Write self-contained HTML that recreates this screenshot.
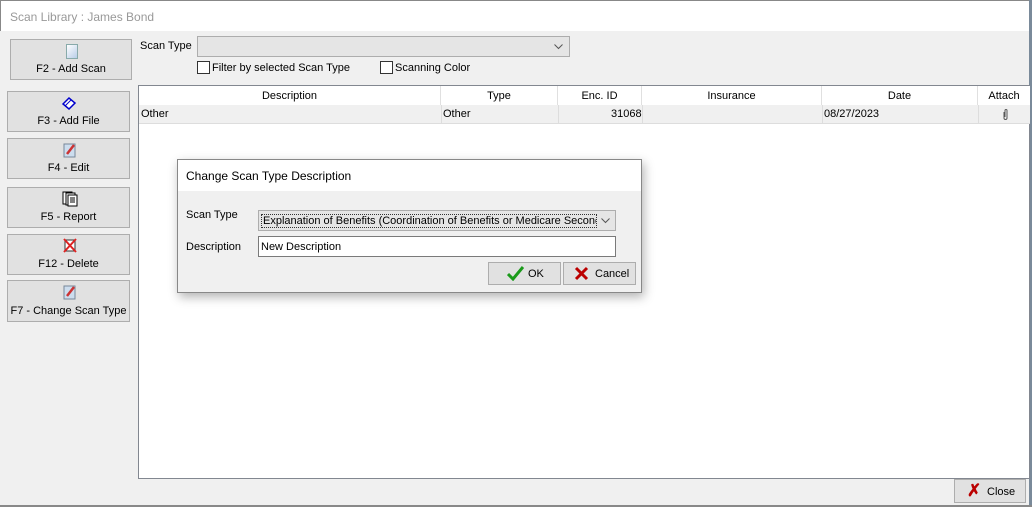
<!DOCTYPE html>
<html><head><style>
*{box-sizing:border-box;margin:0;padding:0}
body{width:1032px;height:507px;position:relative;background:#f0f0f0;font-family:"Liberation Sans",sans-serif;font-size:11px;color:#000;overflow:hidden;white-space:nowrap}
.a{position:absolute}
.title{left:0;top:0;width:1032px;height:31px;background:#fff;color:#999;font-size:12px;padding:9px 0 0 9px;border-left:1px solid #888;border-top:1px solid #888}
.btn{position:absolute;background:#e1e1e1;border:1px solid #adadad;text-align:center}
.btn .t{position:absolute;left:0;right:0;bottom:4px}
.hd{position:absolute;top:0;height:19px;border-right:1px solid #e0e0e0;text-align:center;padding-top:4px;background:#fff}
.cb{position:absolute;width:13px;height:13px;border:1px solid #333;background:#fff}
</style></head><body>
<div class="a title">Scan Library : James Bond</div>
<div class="a" style="left:1029px;top:0;width:3px;height:507px;background:#7a8a9a"></div>
<div class="a" style="left:0;top:505px;width:1032px;height:2px;background:#888"></div>

<div class="btn" style="left:10px;top:39px;width:122px;height:41px"><div class="a" style="left:55px;top:4px;width:12px;height:15px;border:1px solid #8aa;background:linear-gradient(135deg,#fff,#b8cde8)"></div><div class="t">F2 - Add Scan</div></div>
<div class="btn" style="left:7px;top:91px;width:123px;height:41px"><svg class="a" style="left:53px;top:4px" width="16" height="14"><path d="M2 8 L8 2 L14 7 L8 13 Z" fill="#fff" stroke="#00c" stroke-width="1.5"/><path d="M4 10 L10 4" stroke="#00c"/></svg><div class="t">F3 - Add File</div></div>
<div class="btn" style="left:7px;top:138px;width:123px;height:41px"><svg class="a" style="left:55px;top:3px" width="14" height="16"><rect x="1" y="2" width="11" height="13" fill="#cde" stroke="#789"/><path d="M4 12 L11 3" stroke="#c33" stroke-width="2.5"/></svg><div class="t">F4 - Edit</div></div>
<div class="btn" style="left:7px;top:187px;width:123px;height:41px"><svg class="a" style="left:54px;top:3px" width="16" height="16"><rect x="1" y="1" width="9" height="12" fill="#fff" stroke="#000"/><rect x="4" y="2" width="9" height="12" fill="#fff" stroke="#000"/><rect x="6" y="4" width="9" height="11" fill="#fff" stroke="#000"/><path d="M8 7h5M8 9h5M8 11h5" stroke="#000"/></svg><div class="t">F5 - Report</div></div>
<div class="btn" style="left:7px;top:234px;width:123px;height:41px"><svg class="a" style="left:55px;top:3px" width="14" height="15"><rect x="2" y="2" width="10" height="11" fill="#fff" stroke="#333"/><path d="M1 1L13 14M13 1L1 14" stroke="#d22" stroke-width="2"/></svg><div class="t">F12 - Delete</div></div>
<div class="btn" style="left:7px;top:280px;width:123px;height:42px"><svg class="a" style="left:55px;top:3px" width="14" height="16"><rect x="1" y="2" width="11" height="13" fill="#cde" stroke="#789"/><path d="M4 12 L11 3" stroke="#c33" stroke-width="2.5"/></svg><div class="t">F7 - Change Scan Type</div></div>

<div class="a" style="left:140px;top:40px">Scan Type</div>
<div class="a" style="left:197px;top:36px;width:373px;height:21px;background:#e5e5e5;border:1px solid #adadad"><svg class="a" style="right:6px;top:7px" width="9" height="6"><path d="M0.5 0.5L4.5 4.5L8.5 0.5" fill="none" stroke="#555"/></svg></div>
<div class="cb" style="left:197px;top:61px"></div><div class="a" style="left:212px;top:62px">Filter by selected Scan Type</div>
<div class="cb" style="left:380px;top:61px"></div><div class="a" style="left:395px;top:62px">Scanning Color</div>

<div class="a" style="left:138px;top:85px;width:892px;height:394px;background:#fff;border:1px solid #828790">
<div class="hd" style="left:0;width:302px">Description</div>
<div class="hd" style="left:302px;width:117px">Type</div>
<div class="hd" style="left:419px;width:84px">Enc. ID</div>
<div class="hd" style="left:503px;width:180px">Insurance</div>
<div class="hd" style="left:683px;width:156px">Date</div>
<div class="hd" style="left:839px;width:52px;border-right:0">Attach</div>
<div class="a" style="left:0;top:19px;width:891px;height:19px;background:#f0f0f0;border-bottom:1px solid #ddd">
<span class="a" style="left:2px;top:3px">Other</span><span class="a" style="left:304px;top:3px">Other</span><span class="a" style="left:472px;top:3px">31068</span><span class="a" style="left:685px;top:3px">08/27/2023</span>
<svg class="a" style="left:863px;top:3px" width="7" height="13"><path d="M2 4V10a1.5 1.5 0 0 0 3 0V2.5a1 1 0 0 0-2 0V9" fill="none" stroke="#555"/></svg>
<div class="a" style="left:302px;top:0;width:1px;height:18px;background:#ddd"></div><div class="a" style="left:419px;top:0;width:1px;height:18px;background:#ddd"></div><div class="a" style="left:503px;top:0;width:1px;height:18px;background:#ddd"></div><div class="a" style="left:683px;top:0;width:1px;height:18px;background:#ddd"></div><div class="a" style="left:839px;top:0;width:1px;height:18px;background:#ddd"></div>
</div></div>

<div class="btn" style="left:954px;top:479px;width:72px;height:24px"><span class="a" style="left:12px;top:1px;color:#b00;font-size:17px;font-weight:bold">&#10007;</span><span class="a" style="left:32px;top:6px">Close</span></div>

<div class="a" style="left:177px;top:159px;width:465px;height:134px;background:#f0f0f0;border:1px solid #888;box-shadow:2px 4px 10px rgba(0,0,0,.3)">
<div class="a" style="left:0;top:0;width:463px;height:31px;background:#fff;font-size:12px;padding:9px 0 0 8px">Change Scan Type Description</div>
<div class="a" style="left:8px;top:49px">Scan Type</div>
<div class="a" style="left:80px;top:50px;width:358px;height:21px;background:#e5e5e5;border:1px solid #adadad;overflow:hidden"><span class="a" style="left:2px;top:3px;border:1px dotted #333;padding:0 1px;width:336px;height:14px;overflow:hidden">Explanation of Benefits (Coordination of Benefits or Medicare Secondary)</span><svg class="a" style="right:5px;top:7px" width="9" height="6"><path d="M0.5 0.5L4.5 4.5L8.5 0.5" fill="none" stroke="#555"/></svg></div>
<div class="a" style="left:8px;top:81px">Description</div>
<div class="a" style="left:80px;top:76px;width:358px;height:21px;background:#fff;border:1px solid #7a7a7a;padding:4px 2px">New Description</div>
<div class="btn" style="left:310px;top:102px;width:73px;height:23px"><svg class="a" style="left:18px;top:3px" width="17" height="15"><path d="M1 8 L6 13 L16 1" fill="none" stroke="#1a9a1a" stroke-width="3"/></svg><span class="a" style="left:39px;top:5px">OK</span></div>
<div class="btn" style="left:385px;top:102px;width:73px;height:23px"><svg class="a" style="left:10px;top:3px" width="15" height="15"><path d="M2 2L13 13M13 2L2 13" stroke="#b00" stroke-width="3"/></svg><span class="a" style="left:31px;top:5px">Cancel</span></div>
</div>
</body></html>
